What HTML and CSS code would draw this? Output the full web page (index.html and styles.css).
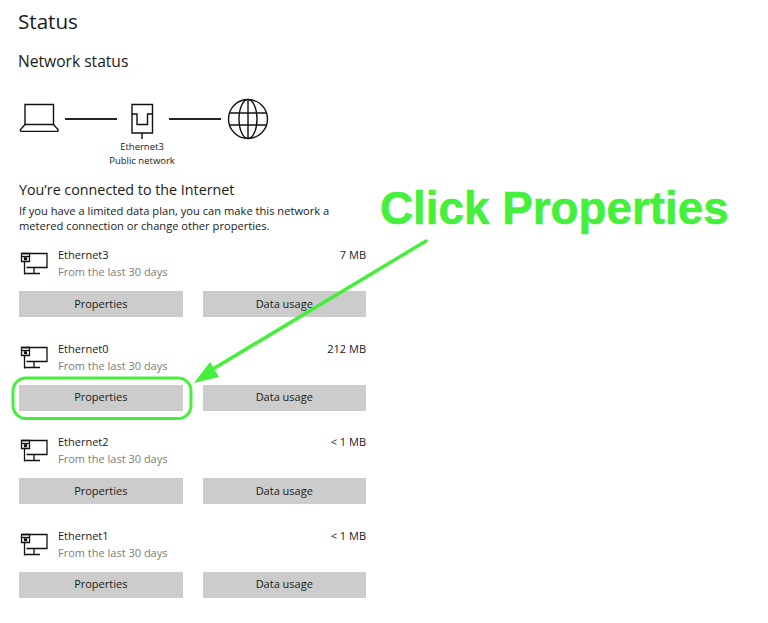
FILE: index.html
```html
<!DOCTYPE html>
<html lang="en">
<head>
    <meta charset="UTF-8">
    <meta name="viewport" content="width=device-width, initial-scale=1.0">
    <title>Status</title>
    <link rel="stylesheet" href="styles.css">
</head>
<body>
<main class="panel">
    <h1>Status</h1>
    <h2>Network status</h2>

    <div class="diagram">
        <svg class="diagram-icon laptop" width="40" height="32" viewBox="0 0 40 32" fill="none" stroke="#111" stroke-width="1.4">
            <path d="M6 4.5H34.5V24.5H6Z"/>
            <path d="M6 24.5L1.5 29.5Q1 31.5 3 31.5H37.5Q39.5 31.5 39 29.5L34.5 24.5"/>
        </svg>
        <span class="link-line first"></span>
        <div class="adapter">
            <svg width="24" height="36" viewBox="0 0 24 36" fill="none" stroke="#111" stroke-width="1.4">
                <path d="M2 1.5H22.5V30H2Z"/>
                <path d="M2 11H7V21.5H17.5V11H22.5"/>
                <path d="M12 30V36"/>
            </svg>
            <div class="adapter-label">Ethernet3<br>Public network</div>
        </div>
        <span class="link-line second"></span>
        <svg class="diagram-icon" width="42" height="42" viewBox="0 0 42 42" fill="none" stroke="#111" stroke-width="1.4">
            <circle cx="21" cy="21" r="19.5"/>
            <ellipse cx="21" cy="21" rx="9" ry="19.5"/>
            <path d="M21 1.5V40.5M2.5 15H39.5M2.5 27H39.5"/>
        </svg>
    </div>

    <h3>You’re connected to the Internet</h3>
    <p class="note">If you have a limited data plan, you can make this network a metered connection or change other properties.</p>

    <section class="network">
        <div class="network-info">
            <svg class="network-icon" width="30" height="24" viewBox="0 0 30 24" fill="none" stroke="#111" stroke-width="1.3"><use href="#pc"/></svg>
            <div class="network-text">
                <div>Ethernet3</div>
                <div class="muted">From the last 30 days</div>
            </div>
            <div class="usage">7 MB</div>
        </div>
        <div class="actions">
            <button type="button">Properties</button>
            <button type="button">Data usage</button>
        </div>
    </section>

    <section class="network">
        <div class="network-info">
            <svg class="network-icon" width="30" height="24" viewBox="0 0 30 24" fill="none" stroke="#111" stroke-width="1.3"><use href="#pc"/></svg>
            <div class="network-text">
                <div>Ethernet0</div>
                <div class="muted">From the last 30 days</div>
            </div>
            <div class="usage">212 MB</div>
        </div>
        <div class="actions">
            <button type="button">Properties</button>
            <button type="button">Data usage</button>
        </div>
    </section>

    <section class="network">
        <div class="network-info">
            <svg class="network-icon" width="30" height="24" viewBox="0 0 30 24" fill="none" stroke="#111" stroke-width="1.3"><use href="#pc"/></svg>
            <div class="network-text">
                <div>Ethernet2</div>
                <div class="muted">From the last 30 days</div>
            </div>
            <div class="usage">&lt; 1 MB</div>
        </div>
        <div class="actions">
            <button type="button">Properties</button>
            <button type="button">Data usage</button>
        </div>
    </section>

    <section class="network">
        <div class="network-info">
            <svg class="network-icon" width="30" height="24" viewBox="0 0 30 24" fill="none" stroke="#111" stroke-width="1.3"><use href="#pc"/></svg>
            <div class="network-text">
                <div>Ethernet1</div>
                <div class="muted">From the last 30 days</div>
            </div>
            <div class="usage">&lt; 1 MB</div>
        </div>
        <div class="actions">
            <button type="button">Properties</button>
            <button type="button">Data usage</button>
        </div>
    </section>
</main>

<div class="callout">Click Properties</div>

<svg class="annotation" width="768" height="623" viewBox="0 0 768 623" fill="none">
    <defs>
        <g id="pc">
            <path d="M2.5 1.5H28V15.5H7.5"/>
            <path d="M2.5 1.5H10.5V9.5H2.5Z"/>
            <path d="M2.5 4.5H10.5"/>
            <path d="M5.5 6H7.5V7.5H5.5Z"/>
            <path d="M5.5 9.5V22.5"/>
            <path d="M5.5 21.5H21M15 15.5V21.5"/>
        </g>
    </defs>
    <rect x="13" y="378" width="178" height="40.5" rx="13" stroke="#45f03c" stroke-width="3"/>
    <path d="M426 241L208 372" stroke="#45f03c" stroke-width="3.5" stroke-linecap="round"/>
    <path d="M194 383L210 362L219 377Z" fill="#45f03c"/>
</svg>
</body>
</html>
```

FILE: styles.css
```css
body {
    font-family: "Open Sans", "Noto Sans", sans-serif;
    margin: 0;
    padding: 0;
    background-color: white;
    color: #1a1a1a;
    height: 623px;
    overflow: hidden;
    position: relative;
}

.panel {
    width: 347px;
    padding: 7px 0 0 19px;
}

h1 {
    font-size: 20.6px;
    font-weight: 400;
    line-height: 28px;
    margin: 0;
    margin-left: -1px;
}

h2 {
    font-size: 15.6px;
    font-weight: 400;
    line-height: 20px;
    margin: 16px 0 0;
    margin-left: -1px;
}

.diagram {
    display: flex;
    align-items: flex-start;
    margin-top: 27px;
    height: 72px;
}

.diagram-icon {
    flex: none;
}

.laptop {
    margin-top: 2px;
}

.link-line {
    width: 52px;
    height: 1.5px;
    background-color: #222;
    margin-top: 20px;
}

.link-line.first {
    margin-left: 6px;
    margin-right: 14px;
}

.link-line.second {
    margin-left: 16px;
    margin-right: 6px;
}

.adapter {
    flex: 0 0 22px;
    min-width: 0;
    display: flex;
    flex-direction: column;
    align-items: center;
    margin-top: 5px;
}

.adapter-label {
    font-size: 9.5px;
    line-height: 14px;
    text-align: center;
    white-space: nowrap;
    margin-top: 1px;
}

h3 {
    font-size: 14.3px;
    font-weight: 400;
    line-height: 20px;
    margin: 10px 0 0;
}

.note {
    font-size: 11.15px;
    line-height: 15px;
    margin: 3px 0 0;
}

.network {
    margin-top: 7px;
    height: 86.5px;
}

.network:first-of-type {
    margin-top: 13px;
}

.network-info {
    display: flex;
    font-size: 11px;
    line-height: 17px;
}

.network-icon {
    flex: none;
    margin: 6px 9px 0 0;
}

.network-text {
    flex: 1;
}

.muted {
    color: #7d7d7d;
}

.actions {
    display: flex;
    gap: 20px;
    margin-top: 11px;
}

button {
    flex: 1;
    height: 26px;
    padding: 0 0 2px;
    border: none;
    background-color: #cccccc;
    color: #1a1a1a;
    font-family: inherit;
    font-size: 11px;
}

.callout {
    position: absolute;
    left: 380px;
    top: 182px;
    font-family: "Liberation Sans", Arial, sans-serif;
    font-size: 45.8px;
    font-weight: bold;
    line-height: 54px;
    color: #45f03c;
    -webkit-text-stroke: 0.6px #45f03c;
    white-space: nowrap;
}

.annotation {
    position: absolute;
    left: 0;
    top: 0;
}
```
